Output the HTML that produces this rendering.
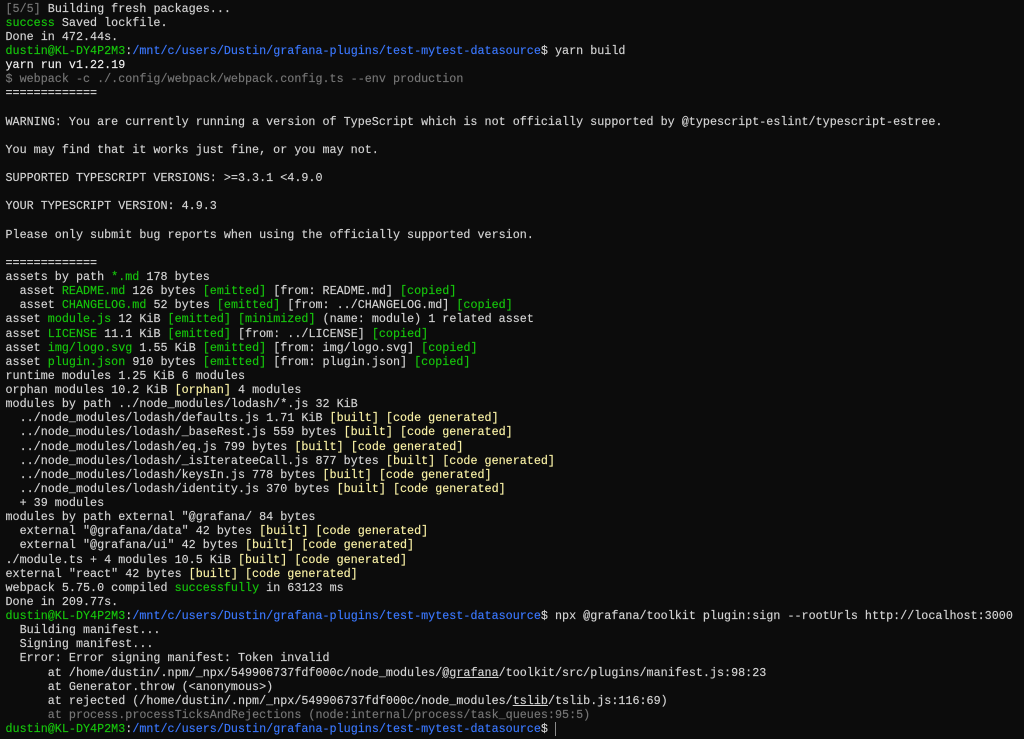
<!DOCTYPE html>
<html><head><meta charset="utf-8"><style>
html,body{margin:0;padding:0;width:1024px;height:739px;overflow:hidden;background:#0c0c0c}
pre{margin:0;position:absolute;left:5.5px;top:1.7px;font:11.73px/14.12px "Liberation Mono",monospace;letter-spacing:0.012px;color:#d4d4d4;white-space:pre;-webkit-text-stroke:0.15px #d4d4d4}
.g,.d{color:#16c60c;-webkit-text-stroke-color:#16c60c}
.b{color:#3b78ff;-webkit-text-stroke-color:#3b78ff}
.y{color:#f9f1a5;-webkit-text-stroke-color:#f9f1a5}
.k{color:#767676;-webkit-text-stroke-color:#767676}
.w{color:#f2f2f2;-webkit-text-stroke-color:#f2f2f2}
u{text-underline-offset:1px}
#c{position:absolute;left:555px;top:722px;width:1px;height:14px;background:#8a8a8a}
</style></head><body>
<pre><span class="k">[5/5]</span> Building fresh packages...
<span class="g">success</span> Saved lockfile.
Done in 472.44s.
<span class="g">dustin@KL-DY4P2M3</span>:<span class="b">/mnt/c/users/Dustin/grafana-plugins/test-mytest-datasource</span>$ yarn build
<span class="w">yarn run v1.22.19</span>
<span class="k">$ webpack -c ./.config/webpack/webpack.config.ts --env production</span>
=============

WARNING: You are currently running a version of TypeScript which is not officially supported by @typescript-eslint/typescript-estree.

You may find that it works just fine, or you may not.

SUPPORTED TYPESCRIPT VERSIONS: &gt;=3.3.1 &lt;4.9.0

YOUR TYPESCRIPT VERSION: 4.9.3

Please only submit bug reports when using the officially supported version.

=============
assets by path <span class="d">*.md</span> 178 bytes
  asset <span class="d">README.md</span> 126 bytes <span class="d">[emitted]</span> [from: README.md] <span class="d">[copied]</span>
  asset <span class="d">CHANGELOG.md</span> 52 bytes <span class="d">[emitted]</span> [from: ../CHANGELOG.md] <span class="d">[copied]</span>
asset <span class="d">module.js</span> 12 KiB <span class="d">[emitted]</span> <span class="d">[minimized]</span> (name: module) 1 related asset
asset <span class="d">LICENSE</span> 11.1 KiB <span class="d">[emitted]</span> [from: ../LICENSE] <span class="d">[copied]</span>
asset <span class="d">img/logo.svg</span> 1.55 KiB <span class="d">[emitted]</span> [from: img/logo.svg] <span class="d">[copied]</span>
asset <span class="d">plugin.json</span> 910 bytes <span class="d">[emitted]</span> [from: plugin.json] <span class="d">[copied]</span>
runtime modules 1.25 KiB 6 modules
orphan modules 10.2 KiB <span class="y">[orphan]</span> 4 modules
modules by path ../node_modules/lodash/*.js 32 KiB
  ../node_modules/lodash/defaults.js 1.71 KiB <span class="y">[built]</span> <span class="y">[code generated]</span>
  ../node_modules/lodash/_baseRest.js 559 bytes <span class="y">[built]</span> <span class="y">[code generated]</span>
  ../node_modules/lodash/eq.js 799 bytes <span class="y">[built]</span> <span class="y">[code generated]</span>
  ../node_modules/lodash/_isIterateeCall.js 877 bytes <span class="y">[built]</span> <span class="y">[code generated]</span>
  ../node_modules/lodash/keysIn.js 778 bytes <span class="y">[built]</span> <span class="y">[code generated]</span>
  ../node_modules/lodash/identity.js 370 bytes <span class="y">[built]</span> <span class="y">[code generated]</span>
  + 39 modules
modules by path external "@grafana/ 84 bytes
  external "@grafana/data" 42 bytes <span class="y">[built]</span> <span class="y">[code generated]</span>
  external "@grafana/ui" 42 bytes <span class="y">[built]</span> <span class="y">[code generated]</span>
./module.ts + 4 modules 10.5 KiB <span class="y">[built]</span> <span class="y">[code generated]</span>
external "react" 42 bytes <span class="y">[built]</span> <span class="y">[code generated]</span>
webpack 5.75.0 compiled <span class="g">successfully</span> in 63123 ms
Done in 209.77s.
<span class="g">dustin@KL-DY4P2M3</span>:<span class="b">/mnt/c/users/Dustin/grafana-plugins/test-mytest-datasource</span>$ npx @grafana/toolkit plugin:sign --rootUrls http://localhost:3000
  Building manifest...
  Signing manifest...
  Error: Error signing manifest: Token invalid
      at /home/dustin/.npm/_npx/549906737fdf000c/node_modules/<u>@grafana</u>/toolkit/src/plugins/manifest.js:98:23
      at Generator.throw (&lt;anonymous&gt;)
      at rejected (/home/dustin/.npm/_npx/549906737fdf000c/node_modules/<u>tslib</u>/tslib.js:116:69)
      <span class="k">at process.processTicksAndRejections (node:internal/process/task_queues:95:5)</span>
<span class="g">dustin@KL-DY4P2M3</span>:<span class="b">/mnt/c/users/Dustin/grafana-plugins/test-mytest-datasource</span>$ </pre>
<div id="c"></div>
</body></html>
